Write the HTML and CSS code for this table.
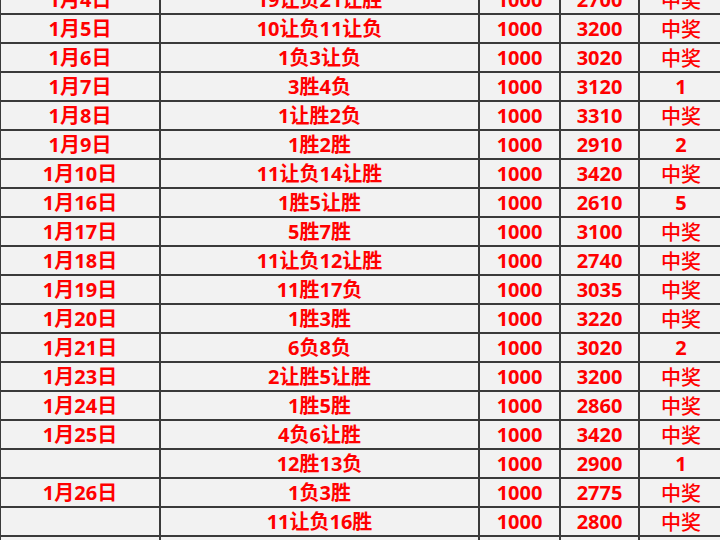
FILE: index.html
```html
<!DOCTYPE html>
<html lang="zh-CN">
<head>
<meta charset="utf-8">
<link rel="stylesheet" href="styles.css">
</head>
<body>
<div class="sheet">
  <div class="c">1月4日</div><div class="c">19让负21让胜</div><div class="c">1000</div><div class="c">2700</div><div class="c r">中奖</div>
  <div class="c">1月5日</div><div class="c">10让负11让负</div><div class="c">1000</div><div class="c">3200</div><div class="c r">中奖</div>
  <div class="c">1月6日</div><div class="c">1负3让负</div><div class="c">1000</div><div class="c">3020</div><div class="c r">中奖</div>
  <div class="c">1月7日</div><div class="c">3胜4负</div><div class="c">1000</div><div class="c">3120</div><div class="c">1</div>
  <div class="c">1月8日</div><div class="c">1让胜2负</div><div class="c">1000</div><div class="c">3310</div><div class="c r">中奖</div>
  <div class="c">1月9日</div><div class="c">1胜2胜</div><div class="c">1000</div><div class="c">2910</div><div class="c">2</div>
  <div class="c">1月10日</div><div class="c">11让负14让胜</div><div class="c">1000</div><div class="c">3420</div><div class="c r">中奖</div>
  <div class="c">1月16日</div><div class="c">1胜5让胜</div><div class="c">1000</div><div class="c">2610</div><div class="c">5</div>
  <div class="c">1月17日</div><div class="c">5胜7胜</div><div class="c">1000</div><div class="c">3100</div><div class="c r">中奖</div>
  <div class="c">1月18日</div><div class="c">11让负12让胜</div><div class="c">1000</div><div class="c">2740</div><div class="c r">中奖</div>
  <div class="c">1月19日</div><div class="c">11胜17负</div><div class="c">1000</div><div class="c">3035</div><div class="c r">中奖</div>
  <div class="c">1月20日</div><div class="c">1胜3胜</div><div class="c">1000</div><div class="c">3220</div><div class="c r">中奖</div>
  <div class="c">1月21日</div><div class="c">6负8负</div><div class="c">1000</div><div class="c">3020</div><div class="c">2</div>
  <div class="c">1月23日</div><div class="c">2让胜5让胜</div><div class="c">1000</div><div class="c">3200</div><div class="c r">中奖</div>
  <div class="c">1月24日</div><div class="c">1胜5胜</div><div class="c">1000</div><div class="c">2860</div><div class="c r">中奖</div>
  <div class="c">1月25日</div><div class="c">4负6让胜</div><div class="c">1000</div><div class="c">3420</div><div class="c r">中奖</div>
  <div class="c"></div><div class="c">12胜13负</div><div class="c">1000</div><div class="c">2900</div><div class="c">1</div>
  <div class="c">1月26日</div><div class="c">1负3胜</div><div class="c">1000</div><div class="c">2775</div><div class="c r">中奖</div>
  <div class="c"></div><div class="c">11让负16胜</div><div class="c">1000</div><div class="c">2800</div><div class="c r">中奖</div>
  <div class="c"></div><div class="c"></div><div class="c"></div><div class="c"></div><div class="c"></div>
</div>
</body>
</html>
```
FILE: styles.css
```css
html, body {
  margin: 0;
  padding: 0;
  background: #f2f2f2;
  overflow: hidden;
}
.sheet {
  display: grid;
  grid-template-columns: 158px 317px 79px 77px 82px;
  grid-auto-rows: 27px;
  gap: 2px;
  padding: 0 0 2px 1px;
  margin-top: -14px;
  width: 722px;
  background: #3a3a3a;
}
.c {
  background: #f2f2f2;
  color: #ff0000;
  font-family: "Open Sans", "Noto Sans CJK SC", sans-serif;
  font-weight: 700;
  font-size: 20px;
  line-height: 27px;
  text-align: center;
  white-space: nowrap;
  overflow: hidden;
}
.r {
  font-weight: 500;
  font-family: "Noto Sans CJK SC", sans-serif;
}
```
